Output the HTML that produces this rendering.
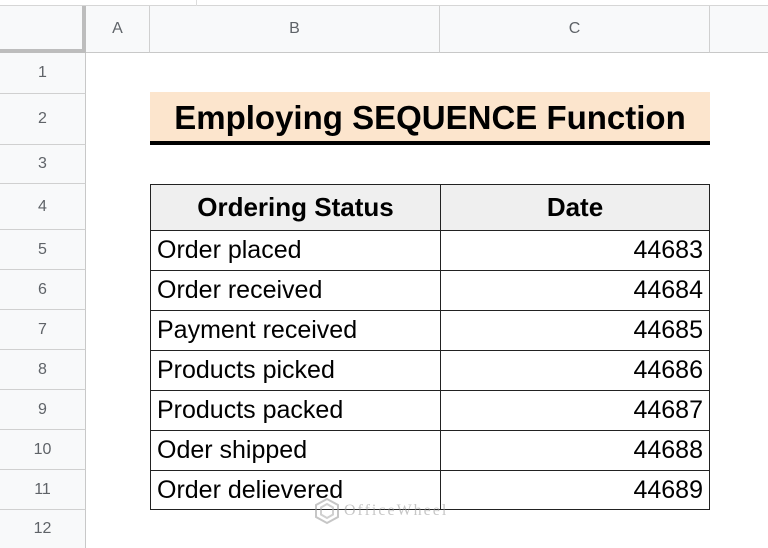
<!DOCTYPE html>
<html><head><style>
*{margin:0;padding:0;box-sizing:border-box}
body{width:768px;height:548px;overflow:hidden;background:#fff;font-family:"Liberation Sans",Arial,sans-serif;position:relative}
.a{position:absolute}
.hdr{background:#f8f9fa;color:#5f6368;font-size:16px;display:flex;align-items:center;justify-content:center}
.rn{left:0;width:86px;border-bottom:1px solid #d0d0d0;border-right:1px solid #c8c8c8}
.c{position:absolute;border:1px solid #222;font-size:25px;color:#000;display:flex;align-items:center;padding:0 6px;white-space:nowrap}
</style></head><body>
<div class="a" style="left:0;top:0;width:768px;height:6px;background:#fff;border-bottom:1px solid #d6d6d6"></div>
<div class="a" style="left:196px;top:0;width:1px;height:6px;background:#ddd"></div>
<div class="a hdr" style="left:0;top:6px;width:86px;height:47px;border-right:4px solid #bdbdbd;border-bottom:4px solid #bdbdbd"></div>
<div class="a hdr" style="left:86px;top:6px;width:64px;height:47px;border-right:1px solid #d0d0d0;border-bottom:1px solid #c8c8c8">A</div>
<div class="a hdr" style="left:150px;top:6px;width:290px;height:47px;border-right:1px solid #d0d0d0;border-bottom:1px solid #c8c8c8">B</div>
<div class="a hdr" style="left:440px;top:6px;width:270px;height:47px;border-right:1px solid #d0d0d0;border-bottom:1px solid #c8c8c8">C</div>
<div class="a hdr" style="left:710px;top:6px;width:58px;height:47px;border-bottom:1px solid #c8c8c8"></div>
<div class="a hdr rn" style="top:53px;height:41px">1</div>
<div class="a hdr rn" style="top:94px;height:51px">2</div>
<div class="a hdr rn" style="top:145px;height:39px">3</div>
<div class="a hdr rn" style="top:184px;height:46px">4</div>
<div class="a hdr rn" style="top:230px;height:40px">5</div>
<div class="a hdr rn" style="top:270px;height:40px">6</div>
<div class="a hdr rn" style="top:310px;height:40px">7</div>
<div class="a hdr rn" style="top:350px;height:40px">8</div>
<div class="a hdr rn" style="top:390px;height:40px">9</div>
<div class="a hdr rn" style="top:430px;height:40px">10</div>
<div class="a hdr rn" style="top:470px;height:40px">11</div>
<div class="a hdr rn" style="top:510px;height:38px;border-bottom:none">12</div>
<div class="a" style="left:150px;top:92px;width:560px;height:53px;background:#fce5cd;border-bottom:4px solid #000;font-weight:bold;font-size:33px;display:flex;align-items:center;justify-content:center;padding-top:2px">Employing SEQUENCE Function</div>
<div class="c" style="left:150px;top:184px;width:291px;height:47px;background:#efefef;font-weight:bold;justify-content:center;font-size:26px">Ordering Status</div>
<div class="c" style="left:440px;top:184px;width:270px;height:47px;background:#efefef;font-weight:bold;justify-content:center;font-size:26px">Date</div>
<div class="c" style="left:150px;top:230px;width:291px;height:41px">Order placed</div>
<div class="c" style="left:440px;top:230px;width:270px;height:41px;justify-content:flex-end">44683</div>
<div class="c" style="left:150px;top:270px;width:291px;height:41px">Order received</div>
<div class="c" style="left:440px;top:270px;width:270px;height:41px;justify-content:flex-end">44684</div>
<div class="c" style="left:150px;top:310px;width:291px;height:41px">Payment received</div>
<div class="c" style="left:440px;top:310px;width:270px;height:41px;justify-content:flex-end">44685</div>
<div class="c" style="left:150px;top:350px;width:291px;height:41px">Products picked</div>
<div class="c" style="left:440px;top:350px;width:270px;height:41px;justify-content:flex-end">44686</div>
<div class="c" style="left:150px;top:390px;width:291px;height:41px">Products packed</div>
<div class="c" style="left:440px;top:390px;width:270px;height:41px;justify-content:flex-end">44687</div>
<div class="c" style="left:150px;top:430px;width:291px;height:41px">Oder shipped</div>
<div class="c" style="left:440px;top:430px;width:270px;height:41px;justify-content:flex-end">44688</div>
<div class="c" style="left:150px;top:470px;width:291px;height:40px">Order delievered</div>
<div class="c" style="left:440px;top:470px;width:270px;height:40px;justify-content:flex-end">44689</div>
<div class="a" style="left:314px;top:497px;width:146px;height:28px;display:flex;align-items:center;gap:4px;opacity:.55">
<svg width="26" height="28" viewBox="0 0 26 28"><path d="M13 2L24 8V20L13 26L2 20V8Z" fill="none" stroke="#999" stroke-width="2"/><path d="M13 7L19 10.5V17.5L13 21L7 17.5V10.5Z" fill="none" stroke="#aaa" stroke-width="2"/></svg>
<span style="font-family:'Liberation Serif',serif;font-size:16px;color:#999;letter-spacing:2px">OfficeWheel</span></div>
</body></html>
